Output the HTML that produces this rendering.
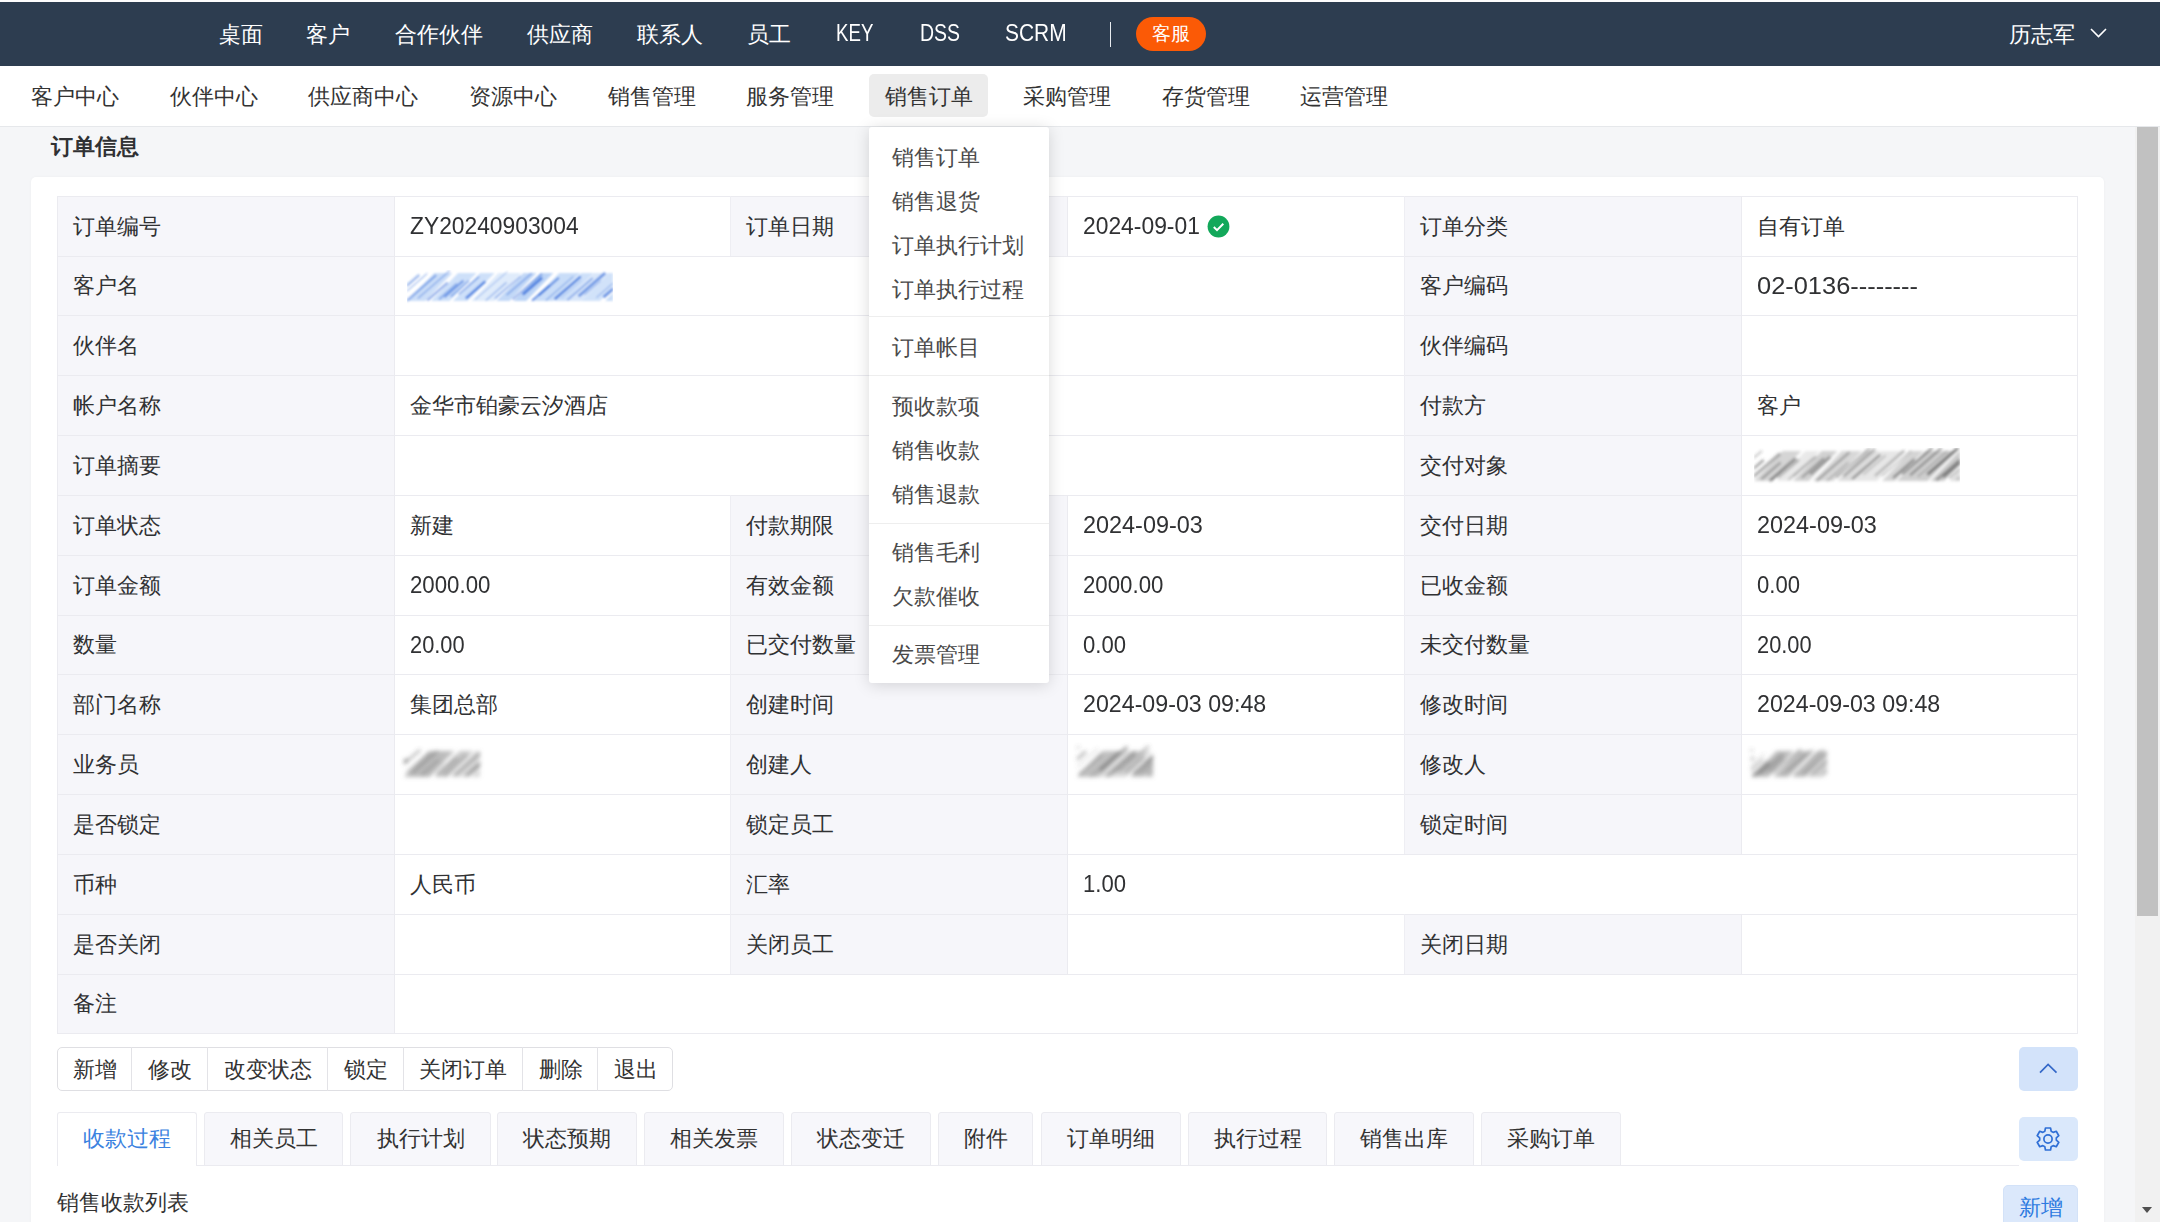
<!DOCTYPE html>
<html><head><meta charset="utf-8"><style>
html,body{margin:0;padding:0;}
body{width:2160px;height:1222px;overflow:hidden;position:relative;background:#f5f6f8;font-family:"Liberation Sans", sans-serif;}
.t{position:absolute;white-space:nowrap;}
</style></head><body>
<div style="position:absolute;left:0px;top:0px;width:2160px;height:2px;background:#fdfdfd;"></div>
<div style="position:absolute;left:0px;top:2px;width:2160px;height:64px;background:#2d3d50;"></div>
<div style="position:absolute;left:0px;top:66px;width:2160px;height:60px;background:#ffffff;"></div>
<div style="position:absolute;left:0px;top:126px;width:2160px;height:1px;background:#e6e8eb;"></div>
<div class="t " style="left:219px;top:17.50px;font-size:22px;line-height:33.0px;color:#ffffff;font-weight:normal;">桌面</div>
<div class="t " style="left:306px;top:17.50px;font-size:22px;line-height:33.0px;color:#ffffff;font-weight:normal;">客户</div>
<div class="t " style="left:395px;top:17.50px;font-size:22px;line-height:33.0px;color:#ffffff;font-weight:normal;">合作伙伴</div>
<div class="t " style="left:527px;top:17.50px;font-size:22px;line-height:33.0px;color:#ffffff;font-weight:normal;">供应商</div>
<div class="t " style="left:637px;top:17.50px;font-size:22px;line-height:33.0px;color:#ffffff;font-weight:normal;">联系人</div>
<div class="t " style="left:747px;top:17.50px;font-size:22px;line-height:33.0px;color:#ffffff;font-weight:normal;">员工</div>
<div class="t lat" style="left:836px;top:15.00px;font-size:24px;line-height:36.0px;color:#ffffff;font-weight:normal;transform:scaleX(0.777);transform-origin:0 50%;">KEY</div>
<div class="t lat" style="left:920px;top:15.00px;font-size:24px;line-height:36.0px;color:#ffffff;font-weight:normal;transform:scaleX(0.811);transform-origin:0 50%;">DSS</div>
<div class="t lat" style="left:1005px;top:15.00px;font-size:24px;line-height:36.0px;color:#ffffff;font-weight:normal;transform:scaleX(0.873);transform-origin:0 50%;">SCRM</div>
<div style="position:absolute;left:1110px;top:22px;width:1px;height:25px;background:#e8ecf0;"></div>
<div style="position:absolute;left:1136px;top:17px;width:70px;height:34px;background:#fb5a06;border-radius:17px;"></div>
<div class="t " style="left:1152px;top:19.75px;font-size:19px;line-height:28.5px;color:#ffffff;font-weight:normal;">客服</div>
<div class="t " style="left:2009px;top:17.50px;font-size:22px;line-height:33.0px;color:#ffffff;font-weight:normal;">历志军</div>
<svg style="position:absolute;left:2088px;top:26px" width="22" height="16" viewBox="0 0 22 16"><polyline points="3,3 10.5,10.5 18,3" fill="none" stroke="#fff" stroke-width="1.6"/></svg>
<div style="position:absolute;left:869px;top:74px;width:119px;height:43px;background:#ececec;border-radius:5px;"></div>
<div class="t " style="left:31px;top:79.50px;font-size:22px;line-height:33.0px;color:#333333;font-weight:normal;">客户中心</div>
<div class="t " style="left:170px;top:79.50px;font-size:22px;line-height:33.0px;color:#333333;font-weight:normal;">伙伴中心</div>
<div class="t " style="left:308px;top:79.50px;font-size:22px;line-height:33.0px;color:#333333;font-weight:normal;">供应商中心</div>
<div class="t " style="left:469px;top:79.50px;font-size:22px;line-height:33.0px;color:#333333;font-weight:normal;">资源中心</div>
<div class="t " style="left:608px;top:79.50px;font-size:22px;line-height:33.0px;color:#333333;font-weight:normal;">销售管理</div>
<div class="t " style="left:746px;top:79.50px;font-size:22px;line-height:33.0px;color:#333333;font-weight:normal;">服务管理</div>
<div class="t " style="left:885px;top:79.50px;font-size:22px;line-height:33.0px;color:#333333;font-weight:normal;">销售订单</div>
<div class="t " style="left:1023px;top:79.50px;font-size:22px;line-height:33.0px;color:#333333;font-weight:normal;">采购管理</div>
<div class="t " style="left:1162px;top:79.50px;font-size:22px;line-height:33.0px;color:#333333;font-weight:normal;">存货管理</div>
<div class="t " style="left:1300px;top:79.50px;font-size:22px;line-height:33.0px;color:#333333;font-weight:normal;">运营管理</div>
<div class="t " style="left:51px;top:130.00px;font-size:22px;line-height:33.0px;color:#303133;font-weight:bold;">订单信息</div>
<div style="position:absolute;left:31px;top:177px;width:2073px;height:1123px;background:#ffffff;border-radius:5px;box-shadow:0 0 3px rgba(0,0,0,0.04);"></div>
<div style="position:absolute;left:57px;top:196px;width:337px;height:60px;background:#f6f6fa;"></div>
<div class="t " style="left:73px;top:209.80px;font-size:22px;line-height:33.0px;color:#303133;font-weight:normal;">订单编号</div>
<div class="t lat" style="left:409.5px;top:208.30px;font-size:24px;line-height:36.0px;color:#303133;font-weight:normal;transform:scaleX(0.95);transform-origin:0 50%;">ZY20240903004</div>
<div style="position:absolute;left:730px;top:196px;width:337px;height:60px;background:#f6f6fa;"></div>
<div class="t " style="left:746px;top:209.80px;font-size:22px;line-height:33.0px;color:#303133;font-weight:normal;">订单日期</div>
<div class="t lat" style="left:1083px;top:208.30px;font-size:24px;line-height:36.0px;color:#303133;font-weight:normal;transform:scaleX(0.952);transform-origin:0 50%;">2024-09-01</div>
<svg style="position:absolute;left:1207px;top:214.8px" width="23" height="23" viewBox="0 0 23 23"><circle cx="11.5" cy="11.5" r="10.9" fill="#12a85a"/><polyline points="6.8,12 10,15.1 16.3,8.8" fill="none" stroke="#fff" stroke-width="2"/></svg>
<div style="position:absolute;left:1404px;top:196px;width:337px;height:60px;background:#f6f6fa;"></div>
<div class="t " style="left:1420px;top:209.80px;font-size:22px;line-height:33.0px;color:#303133;font-weight:normal;">订单分类</div>
<div class="t " style="left:1757px;top:209.80px;font-size:22px;line-height:33.0px;color:#303133;font-weight:normal;">自有订单</div>
<div style="position:absolute;left:57px;top:256px;width:337px;height:59px;background:#f6f6fa;"></div>
<div class="t " style="left:73px;top:269.30px;font-size:22px;line-height:33.0px;color:#303133;font-weight:normal;">客户名</div>
<svg style="position:absolute;left:407px;top:270px" width="206" height="34" viewBox="0 0 206 34"><defs><filter id="bf1" x="-30%" y="-50%" width="160%" height="200%"><feGaussianBlur stdDeviation="1.1"/></filter><clipPath id="cbf1"><rect x="0" y="0.0" width="206" height="34"/></clipPath></defs><g filter="url(#bf1)"><g clip-path="url(#cbf1)"><polygon points="0.0,31 18.3,31 45.5,3 27.2,3" fill="#8db6f0" fill-opacity="0.45"/><polygon points="23.9,31 42.4,31 69.6,3 51.1,3" fill="#8db6f0" fill-opacity="0.43"/><polygon points="45.9,31 60.5,31 87.7,3 73.1,3" fill="#8db6f0" fill-opacity="0.43"/><polygon points="64.3,31 87.4,31 114.6,3 91.5,3" fill="#8db6f0" fill-opacity="0.28"/><polygon points="89.2,31 102.5,31 129.7,3 116.4,3" fill="#8db6f0" fill-opacity="0.53"/><polygon points="106.6,31 119.2,31 146.4,3 133.8,3" fill="#8db6f0" fill-opacity="0.59"/><polygon points="125.0,31 146.2,31 173.4,3 152.2,3" fill="#8db6f0" fill-opacity="0.47"/><polygon points="147.1,31 159.3,31 186.5,3 174.3,3" fill="#8db6f0" fill-opacity="0.43"/><polygon points="159.7,31 174.3,31 201.5,3 186.9,3" fill="#8db6f0" fill-opacity="0.33"/><polygon points="174.5,31 193.0,31 220.2,3 201.7,3" fill="#8db6f0" fill-opacity="0.40"/><polygon points="198.1,31 217.3,31 244.5,3 225.3,3" fill="#8db6f0" fill-opacity="0.47"/><line x1="-27.2" y1="29.1" x2="-3.7" y2="8.7" stroke="#2f68d8" stroke-width="2.0" stroke-opacity="0.85"/><line x1="-15.2" y1="28.9" x2="12.3" y2="4.9" stroke="#2f68d8" stroke-width="2.3" stroke-opacity="0.46"/><line x1="-8.2" y1="28.3" x2="20.2" y2="3.5" stroke="#2f68d8" stroke-width="0.9" stroke-opacity="0.77"/><line x1="-0.5" y1="31.0" x2="29.2" y2="5.1" stroke="#2f68d8" stroke-width="2.5" stroke-opacity="0.45"/><line x1="10.9" y1="28.3" x2="42.8" y2="0.6" stroke="#2f68d8" stroke-width="1.6" stroke-opacity="0.39"/><line x1="20.3" y1="30.4" x2="40.7" y2="12.6" stroke="#2f68d8" stroke-width="2.2" stroke-opacity="0.52"/><line x1="32.0" y1="29.3" x2="50.0" y2="13.7" stroke="#2f68d8" stroke-width="2.2" stroke-opacity="0.40"/><line x1="37.4" y1="27.2" x2="56.4" y2="10.7" stroke="#2f68d8" stroke-width="2.2" stroke-opacity="0.57"/><line x1="43.8" y1="26.6" x2="62.0" y2="10.8" stroke="#2f68d8" stroke-width="2.1" stroke-opacity="0.41"/><line x1="51.7" y1="24.4" x2="72.2" y2="6.6" stroke="#2f68d8" stroke-width="1.2" stroke-opacity="0.75"/><line x1="58.9" y1="28.3" x2="78.3" y2="11.4" stroke="#2f68d8" stroke-width="2.4" stroke-opacity="0.78"/><line x1="68.3" y1="29.5" x2="100.4" y2="1.7" stroke="#2f68d8" stroke-width="1.0" stroke-opacity="0.48"/><line x1="78.8" y1="30.5" x2="99.6" y2="12.4" stroke="#2f68d8" stroke-width="1.4" stroke-opacity="0.40"/><line x1="87.8" y1="28.5" x2="113.6" y2="6.1" stroke="#2f68d8" stroke-width="1.2" stroke-opacity="0.58"/><line x1="99.5" y1="25.1" x2="124.9" y2="3.1" stroke="#2f68d8" stroke-width="1.7" stroke-opacity="0.44"/><line x1="105.6" y1="29.3" x2="134.9" y2="3.9" stroke="#2f68d8" stroke-width="2.4" stroke-opacity="0.44"/><line x1="115.8" y1="24.5" x2="135.1" y2="7.8" stroke="#2f68d8" stroke-width="2.5" stroke-opacity="0.79"/><line x1="125.0" y1="30.7" x2="142.8" y2="15.3" stroke="#2f68d8" stroke-width="1.6" stroke-opacity="0.83"/><line x1="131.7" y1="25.4" x2="151.9" y2="7.8" stroke="#2f68d8" stroke-width="2.1" stroke-opacity="0.65"/><line x1="138.8" y1="30.5" x2="166.4" y2="6.4" stroke="#2f68d8" stroke-width="1.1" stroke-opacity="0.46"/><line x1="147.7" y1="29.1" x2="173.7" y2="6.5" stroke="#2f68d8" stroke-width="2.3" stroke-opacity="0.81"/><line x1="154.1" y1="28.0" x2="174.5" y2="10.2" stroke="#2f68d8" stroke-width="0.8" stroke-opacity="0.38"/><line x1="160.3" y1="30.1" x2="185.6" y2="8.1" stroke="#2f68d8" stroke-width="1.5" stroke-opacity="0.53"/><line x1="171.6" y1="26.3" x2="198.2" y2="3.1" stroke="#2f68d8" stroke-width="2.6" stroke-opacity="0.64"/><line x1="177.5" y1="24.8" x2="193.9" y2="10.6" stroke="#2f68d8" stroke-width="0.9" stroke-opacity="0.70"/><line x1="189.3" y1="27.7" x2="215.6" y2="4.8" stroke="#2f68d8" stroke-width="0.8" stroke-opacity="0.72"/><line x1="196.5" y1="27.3" x2="213.8" y2="12.2" stroke="#2f68d8" stroke-width="2.6" stroke-opacity="0.72"/></g></g></svg>
<div style="position:absolute;left:1404px;top:256px;width:337px;height:59px;background:#f6f6fa;"></div>
<div class="t " style="left:1420px;top:269.30px;font-size:22px;line-height:33.0px;color:#303133;font-weight:normal;">客户编码</div>
<div class="t lat" style="left:1757px;top:267.80px;font-size:24px;line-height:36.0px;color:#303133;font-weight:normal;transform:scaleX(1.059);transform-origin:0 50%;">02-0136--------</div>
<div style="position:absolute;left:57px;top:315px;width:337px;height:60px;background:#f6f6fa;"></div>
<div class="t " style="left:73px;top:328.80px;font-size:22px;line-height:33.0px;color:#303133;font-weight:normal;">伙伴名</div>
<div style="position:absolute;left:1404px;top:315px;width:337px;height:60px;background:#f6f6fa;"></div>
<div class="t " style="left:1420px;top:328.80px;font-size:22px;line-height:33.0px;color:#303133;font-weight:normal;">伙伴编码</div>
<div style="position:absolute;left:57px;top:375px;width:337px;height:60px;background:#f6f6fa;"></div>
<div class="t " style="left:73px;top:388.80px;font-size:22px;line-height:33.0px;color:#303133;font-weight:normal;">帐户名称</div>
<div class="t " style="left:409.5px;top:388.80px;font-size:22px;line-height:33.0px;color:#303133;font-weight:normal;">金华市铂豪云汐酒店</div>
<div style="position:absolute;left:1404px;top:375px;width:337px;height:60px;background:#f6f6fa;"></div>
<div class="t " style="left:1420px;top:388.80px;font-size:22px;line-height:33.0px;color:#303133;font-weight:normal;">付款方</div>
<div class="t " style="left:1757px;top:388.80px;font-size:22px;line-height:33.0px;color:#303133;font-weight:normal;">客户</div>
<div style="position:absolute;left:57px;top:435px;width:337px;height:60px;background:#f6f6fa;"></div>
<div class="t " style="left:73px;top:448.80px;font-size:22px;line-height:33.0px;color:#303133;font-weight:normal;">订单摘要</div>
<div style="position:absolute;left:1404px;top:435px;width:337px;height:60px;background:#f6f6fa;"></div>
<div class="t " style="left:1420px;top:448.80px;font-size:22px;line-height:33.0px;color:#303133;font-weight:normal;">交付对象</div>
<svg style="position:absolute;left:1754px;top:448px" width="206" height="36" viewBox="0 0 206 36"><defs><filter id="bf2" x="-30%" y="-50%" width="160%" height="200%"><feGaussianBlur stdDeviation="1.4"/></filter><clipPath id="cbf2"><rect x="0" y="0.0" width="206" height="36"/></clipPath></defs><g filter="url(#bf2)"><g clip-path="url(#cbf2)"><polygon points="0.0,33 18.6,33 47.4,3 28.8,3" fill="#a8a8a8" fill-opacity="0.48"/><polygon points="22.6,33 36.6,33 65.4,3 51.4,3" fill="#a8a8a8" fill-opacity="0.25"/><polygon points="38.9,33 54.7,33 83.5,3 67.7,3" fill="#a8a8a8" fill-opacity="0.53"/><polygon points="58.9,33 79.3,33 108.1,3 87.7,3" fill="#a8a8a8" fill-opacity="0.45"/><polygon points="83.3,33 97.3,33 126.1,3 112.1,3" fill="#a8a8a8" fill-opacity="0.40"/><polygon points="98.3,33 122.9,33 151.7,3 127.1,3" fill="#a8a8a8" fill-opacity="0.27"/><polygon points="127.9,33 140.9,33 169.7,3 156.7,3" fill="#a8a8a8" fill-opacity="0.49"/><polygon points="142.9,33 160.6,33 189.4,3 171.7,3" fill="#a8a8a8" fill-opacity="0.54"/><polygon points="160.7,33 173.6,33 202.4,3 189.5,3" fill="#a8a8a8" fill-opacity="0.57"/><polygon points="176.6,33 189.9,33 218.7,3 205.4,3" fill="#a8a8a8" fill-opacity="0.60"/><polygon points="195.6,33 209.1,33 237.9,3 224.4,3" fill="#a8a8a8" fill-opacity="0.40"/><line x1="-28.8" y1="31.8" x2="-0.8" y2="7.5" stroke="#4a4a4a" stroke-width="1.4" stroke-opacity="0.70"/><line x1="-23.4" y1="30.1" x2="7.9" y2="2.9" stroke="#4a4a4a" stroke-width="1.1" stroke-opacity="0.56"/><line x1="-14.3" y1="32.8" x2="9.6" y2="12.0" stroke="#4a4a4a" stroke-width="1.7" stroke-opacity="0.71"/><line x1="-2.5" y1="30.4" x2="26.2" y2="5.5" stroke="#4a4a4a" stroke-width="2.6" stroke-opacity="0.53"/><line x1="7.3" y1="31.3" x2="26.5" y2="14.6" stroke="#4a4a4a" stroke-width="2.0" stroke-opacity="0.53"/><line x1="15.9" y1="32.8" x2="41.8" y2="10.3" stroke="#4a4a4a" stroke-width="2.3" stroke-opacity="0.76"/><line x1="23.9" y1="29.9" x2="45.0" y2="11.6" stroke="#4a4a4a" stroke-width="1.7" stroke-opacity="0.54"/><line x1="34.3" y1="31.7" x2="61.1" y2="8.5" stroke="#4a4a4a" stroke-width="1.0" stroke-opacity="0.70"/><line x1="39.6" y1="28.4" x2="62.8" y2="8.3" stroke="#4a4a4a" stroke-width="1.3" stroke-opacity="0.38"/><line x1="47.8" y1="29.6" x2="69.9" y2="10.3" stroke="#4a4a4a" stroke-width="1.2" stroke-opacity="0.83"/><line x1="56.2" y1="26.3" x2="76.3" y2="8.8" stroke="#4a4a4a" stroke-width="2.5" stroke-opacity="0.53"/><line x1="62.5" y1="33.0" x2="95.5" y2="4.3" stroke="#4a4a4a" stroke-width="2.1" stroke-opacity="0.48"/><line x1="72.9" y1="32.9" x2="94.3" y2="14.3" stroke="#4a4a4a" stroke-width="1.4" stroke-opacity="0.37"/><line x1="82.2" y1="29.4" x2="116.7" y2="-0.6" stroke="#4a4a4a" stroke-width="2.6" stroke-opacity="0.36"/><line x1="89.5" y1="28.4" x2="121.1" y2="0.9" stroke="#4a4a4a" stroke-width="2.2" stroke-opacity="0.46"/><line x1="98.2" y1="31.1" x2="126.2" y2="6.7" stroke="#4a4a4a" stroke-width="1.7" stroke-opacity="0.82"/><line x1="109.4" y1="26.7" x2="131.7" y2="7.3" stroke="#4a4a4a" stroke-width="1.1" stroke-opacity="0.49"/><line x1="121.0" y1="27.9" x2="150.3" y2="2.5" stroke="#4a4a4a" stroke-width="1.7" stroke-opacity="0.46"/><line x1="128.0" y1="28.0" x2="157.1" y2="2.8" stroke="#4a4a4a" stroke-width="1.3" stroke-opacity="0.42"/><line x1="139.2" y1="29.9" x2="160.6" y2="11.2" stroke="#4a4a4a" stroke-width="1.6" stroke-opacity="0.84"/><line x1="148.2" y1="26.1" x2="181.3" y2="-2.7" stroke="#4a4a4a" stroke-width="1.9" stroke-opacity="0.73"/><line x1="156.1" y1="27.3" x2="188.9" y2="-1.2" stroke="#4a4a4a" stroke-width="1.9" stroke-opacity="0.64"/><line x1="163.5" y1="28.9" x2="193.5" y2="2.9" stroke="#4a4a4a" stroke-width="1.5" stroke-opacity="0.36"/><line x1="173.5" y1="26.5" x2="204.5" y2="-0.4" stroke="#4a4a4a" stroke-width="2.4" stroke-opacity="0.81"/><line x1="182.2" y1="32.3" x2="206.0" y2="11.6" stroke="#4a4a4a" stroke-width="2.2" stroke-opacity="0.53"/><line x1="189.4" y1="29.1" x2="218.5" y2="3.8" stroke="#4a4a4a" stroke-width="2.5" stroke-opacity="0.66"/><line x1="195.3" y1="30.2" x2="224.6" y2="4.7" stroke="#4a4a4a" stroke-width="1.8" stroke-opacity="0.47"/><line x1="203.1" y1="32.0" x2="232.2" y2="6.7" stroke="#4a4a4a" stroke-width="1.4" stroke-opacity="0.40"/></g></g></svg>
<div style="position:absolute;left:57px;top:495px;width:337px;height:60px;background:#f6f6fa;"></div>
<div class="t " style="left:73px;top:508.80px;font-size:22px;line-height:33.0px;color:#303133;font-weight:normal;">订单状态</div>
<div class="t " style="left:409.5px;top:508.80px;font-size:22px;line-height:33.0px;color:#303133;font-weight:normal;">新建</div>
<div style="position:absolute;left:730px;top:495px;width:337px;height:60px;background:#f6f6fa;"></div>
<div class="t " style="left:746px;top:508.80px;font-size:22px;line-height:33.0px;color:#303133;font-weight:normal;">付款期限</div>
<div class="t lat" style="left:1083px;top:507.30px;font-size:24px;line-height:36.0px;color:#303133;font-weight:normal;transform:scaleX(0.976);transform-origin:0 50%;">2024-09-03</div>
<div style="position:absolute;left:1404px;top:495px;width:337px;height:60px;background:#f6f6fa;"></div>
<div class="t " style="left:1420px;top:508.80px;font-size:22px;line-height:33.0px;color:#303133;font-weight:normal;">交付日期</div>
<div class="t lat" style="left:1757px;top:507.30px;font-size:24px;line-height:36.0px;color:#303133;font-weight:normal;transform:scaleX(0.976);transform-origin:0 50%;">2024-09-03</div>
<div style="position:absolute;left:57px;top:555px;width:337px;height:60px;background:#f6f6fa;"></div>
<div class="t " style="left:73px;top:568.80px;font-size:22px;line-height:33.0px;color:#303133;font-weight:normal;">订单金额</div>
<div class="t lat" style="left:409.5px;top:567.30px;font-size:24px;line-height:36.0px;color:#303133;font-weight:normal;transform:scaleX(0.927);transform-origin:0 50%;">2000.00</div>
<div style="position:absolute;left:730px;top:555px;width:337px;height:60px;background:#f6f6fa;"></div>
<div class="t " style="left:746px;top:568.80px;font-size:22px;line-height:33.0px;color:#303133;font-weight:normal;">有效金额</div>
<div class="t lat" style="left:1083px;top:567.30px;font-size:24px;line-height:36.0px;color:#303133;font-weight:normal;transform:scaleX(0.927);transform-origin:0 50%;">2000.00</div>
<div style="position:absolute;left:1404px;top:555px;width:337px;height:60px;background:#f6f6fa;"></div>
<div class="t " style="left:1420px;top:568.80px;font-size:22px;line-height:33.0px;color:#303133;font-weight:normal;">已收金额</div>
<div class="t lat" style="left:1757px;top:567.30px;font-size:24px;line-height:36.0px;color:#303133;font-weight:normal;transform:scaleX(0.92);transform-origin:0 50%;">0.00</div>
<div style="position:absolute;left:57px;top:615px;width:337px;height:59px;background:#f6f6fa;"></div>
<div class="t " style="left:73px;top:628.30px;font-size:22px;line-height:33.0px;color:#303133;font-weight:normal;">数量</div>
<div class="t lat" style="left:409.5px;top:626.80px;font-size:24px;line-height:36.0px;color:#303133;font-weight:normal;transform:scaleX(0.91);transform-origin:0 50%;">20.00</div>
<div style="position:absolute;left:730px;top:615px;width:337px;height:59px;background:#f6f6fa;"></div>
<div class="t " style="left:746px;top:628.30px;font-size:22px;line-height:33.0px;color:#303133;font-weight:normal;">已交付数量</div>
<div class="t lat" style="left:1083px;top:626.80px;font-size:24px;line-height:36.0px;color:#303133;font-weight:normal;transform:scaleX(0.92);transform-origin:0 50%;">0.00</div>
<div style="position:absolute;left:1404px;top:615px;width:337px;height:59px;background:#f6f6fa;"></div>
<div class="t " style="left:1420px;top:628.30px;font-size:22px;line-height:33.0px;color:#303133;font-weight:normal;">未交付数量</div>
<div class="t lat" style="left:1757px;top:626.80px;font-size:24px;line-height:36.0px;color:#303133;font-weight:normal;transform:scaleX(0.91);transform-origin:0 50%;">20.00</div>
<div style="position:absolute;left:57px;top:674px;width:337px;height:60px;background:#f6f6fa;"></div>
<div class="t " style="left:73px;top:687.80px;font-size:22px;line-height:33.0px;color:#303133;font-weight:normal;">部门名称</div>
<div class="t " style="left:409.5px;top:687.80px;font-size:22px;line-height:33.0px;color:#303133;font-weight:normal;">集团总部</div>
<div style="position:absolute;left:730px;top:674px;width:337px;height:60px;background:#f6f6fa;"></div>
<div class="t " style="left:746px;top:687.80px;font-size:22px;line-height:33.0px;color:#303133;font-weight:normal;">创建时间</div>
<div class="t lat" style="left:1083px;top:686.30px;font-size:24px;line-height:36.0px;color:#303133;font-weight:normal;transform:scaleX(0.967);transform-origin:0 50%;">2024-09-03 09:48</div>
<div style="position:absolute;left:1404px;top:674px;width:337px;height:60px;background:#f6f6fa;"></div>
<div class="t " style="left:1420px;top:687.80px;font-size:22px;line-height:33.0px;color:#303133;font-weight:normal;">修改时间</div>
<div class="t lat" style="left:1757px;top:686.30px;font-size:24px;line-height:36.0px;color:#303133;font-weight:normal;transform:scaleX(0.967);transform-origin:0 50%;">2024-09-03 09:48</div>
<div style="position:absolute;left:57px;top:734px;width:337px;height:60px;background:#f6f6fa;"></div>
<div class="t " style="left:73px;top:747.80px;font-size:22px;line-height:33.0px;color:#303133;font-weight:normal;">业务员</div>
<svg style="position:absolute;left:398px;top:742px" width="88" height="44" viewBox="-6 -6 88 44"><defs><filter id="bf5" x="-30%" y="-50%" width="160%" height="200%"><feGaussianBlur stdDeviation="2.0"/></filter><clipPath id="cbf5"><rect x="0" y="-3.0" width="76" height="38"/></clipPath></defs><g filter="url(#bf5)"><g clip-path="url(#cbf5)"><polygon points="0.0,29 24.9,29 50.5,3 25.6,3" fill="#8a8a8a" fill-opacity="0.58"/><polygon points="30.3,29 43.5,29 69.1,3 55.9,3" fill="#8a8a8a" fill-opacity="0.46"/><polygon points="46.0,29 65.4,29 91.0,3 71.6,3" fill="#8a8a8a" fill-opacity="0.30"/><polygon points="66.6,29 84.8,29 110.4,3 92.2,3" fill="#8a8a8a" fill-opacity="0.33"/><line x1="-25.6" y1="24.5" x2="-9.4" y2="10.3" stroke="#5a5a5a" stroke-width="0.8" stroke-opacity="0.56"/><line x1="-17.0" y1="28.6" x2="3.3" y2="11.0" stroke="#5a5a5a" stroke-width="2.1" stroke-opacity="0.74"/><line x1="-7.9" y1="22.8" x2="16.3" y2="1.7" stroke="#5a5a5a" stroke-width="2.0" stroke-opacity="0.53"/><line x1="2.4" y1="24.8" x2="25.9" y2="4.3" stroke="#5a5a5a" stroke-width="1.5" stroke-opacity="0.51"/><line x1="8.0" y1="25.2" x2="33.7" y2="2.9" stroke="#5a5a5a" stroke-width="1.7" stroke-opacity="0.57"/><line x1="17.5" y1="26.9" x2="35.1" y2="11.6" stroke="#5a5a5a" stroke-width="1.1" stroke-opacity="0.76"/><line x1="23.9" y1="28.8" x2="40.3" y2="14.5" stroke="#5a5a5a" stroke-width="1.0" stroke-opacity="0.49"/><line x1="32.9" y1="26.6" x2="52.8" y2="9.3" stroke="#5a5a5a" stroke-width="2.3" stroke-opacity="0.49"/><line x1="40.0" y1="27.3" x2="63.2" y2="7.2" stroke="#5a5a5a" stroke-width="2.2" stroke-opacity="0.40"/><line x1="50.5" y1="27.5" x2="77.9" y2="3.7" stroke="#5a5a5a" stroke-width="2.1" stroke-opacity="0.62"/><line x1="62.0" y1="27.9" x2="91.0" y2="2.6" stroke="#5a5a5a" stroke-width="1.9" stroke-opacity="0.84"/><line x1="67.3" y1="23.8" x2="82.6" y2="10.5" stroke="#5a5a5a" stroke-width="1.5" stroke-opacity="0.69"/></g></g></svg>
<div style="position:absolute;left:730px;top:734px;width:337px;height:60px;background:#f6f6fa;"></div>
<div class="t " style="left:746px;top:747.80px;font-size:22px;line-height:33.0px;color:#303133;font-weight:normal;">创建人</div>
<svg style="position:absolute;left:1071px;top:742px" width="88" height="44" viewBox="-6 -6 88 44"><defs><filter id="bf6" x="-30%" y="-50%" width="160%" height="200%"><feGaussianBlur stdDeviation="2.0"/></filter><clipPath id="cbf6"><rect x="0" y="-3.0" width="76" height="38"/></clipPath></defs><g filter="url(#bf6)"><g clip-path="url(#cbf6)"><polygon points="0.0,29 22.0,29 47.6,3 25.6,3" fill="#8a8a8a" fill-opacity="0.54"/><polygon points="23.1,29 49.0,29 74.6,3 48.7,3" fill="#8a8a8a" fill-opacity="0.32"/><polygon points="53.1,29 66.4,29 92.0,3 78.7,3" fill="#8a8a8a" fill-opacity="0.52"/><polygon points="67.3,29 89.2,29 114.8,3 92.9,3" fill="#8a8a8a" fill-opacity="0.50"/><line x1="-25.6" y1="22.7" x2="2.3" y2="-1.6" stroke="#5a5a5a" stroke-width="1.6" stroke-opacity="0.41"/><line x1="-17.0" y1="26.2" x2="9.0" y2="3.5" stroke="#5a5a5a" stroke-width="2.5" stroke-opacity="0.50"/><line x1="-5.3" y1="23.6" x2="21.0" y2="0.7" stroke="#5a5a5a" stroke-width="1.0" stroke-opacity="0.43"/><line x1="2.0" y1="26.7" x2="25.0" y2="6.6" stroke="#5a5a5a" stroke-width="1.3" stroke-opacity="0.80"/><line x1="13.4" y1="28.6" x2="41.8" y2="3.9" stroke="#5a5a5a" stroke-width="1.4" stroke-opacity="0.40"/><line x1="23.1" y1="22.7" x2="50.3" y2="-1.0" stroke="#5a5a5a" stroke-width="2.2" stroke-opacity="0.78"/><line x1="30.0" y1="28.4" x2="58.7" y2="3.4" stroke="#5a5a5a" stroke-width="2.1" stroke-opacity="0.60"/><line x1="36.1" y1="24.7" x2="58.2" y2="5.5" stroke="#5a5a5a" stroke-width="1.1" stroke-opacity="0.84"/><line x1="42.0" y1="24.1" x2="71.8" y2="-1.9" stroke="#5a5a5a" stroke-width="1.7" stroke-opacity="0.62"/><line x1="48.7" y1="24.9" x2="67.5" y2="8.5" stroke="#5a5a5a" stroke-width="1.9" stroke-opacity="0.67"/><line x1="56.4" y1="26.0" x2="77.4" y2="7.8" stroke="#5a5a5a" stroke-width="2.2" stroke-opacity="0.77"/><line x1="63.2" y1="26.2" x2="86.7" y2="5.8" stroke="#5a5a5a" stroke-width="1.1" stroke-opacity="0.79"/><line x1="69.9" y1="26.1" x2="85.7" y2="12.4" stroke="#5a5a5a" stroke-width="1.5" stroke-opacity="0.51"/></g></g></svg>
<div style="position:absolute;left:1404px;top:734px;width:337px;height:60px;background:#f6f6fa;"></div>
<div class="t " style="left:1420px;top:747.80px;font-size:22px;line-height:33.0px;color:#303133;font-weight:normal;">修改人</div>
<svg style="position:absolute;left:1745px;top:742px" width="88" height="44" viewBox="-6 -6 88 44"><defs><filter id="bf7" x="-30%" y="-50%" width="160%" height="200%"><feGaussianBlur stdDeviation="2.0"/></filter><clipPath id="cbf7"><rect x="0" y="-3.0" width="76" height="38"/></clipPath></defs><g filter="url(#bf7)"><g clip-path="url(#cbf7)"><polygon points="0.0,29 17.3,29 42.9,3 25.6,3" fill="#8a8a8a" fill-opacity="0.57"/><polygon points="22.3,29 37.3,29 62.9,3 47.9,3" fill="#8a8a8a" fill-opacity="0.56"/><polygon points="41.2,29 53.7,29 79.3,3 66.8,3" fill="#8a8a8a" fill-opacity="0.58"/><polygon points="55.3,29 71.6,29 97.2,3 80.9,3" fill="#8a8a8a" fill-opacity="0.40"/><polygon points="75.1,29 88.8,29 114.4,3 100.7,3" fill="#8a8a8a" fill-opacity="0.49"/><line x1="-25.6" y1="25.0" x2="1.2" y2="1.7" stroke="#5a5a5a" stroke-width="1.7" stroke-opacity="0.76"/><line x1="-19.3" y1="28.3" x2="2.6" y2="9.2" stroke="#5a5a5a" stroke-width="1.4" stroke-opacity="0.84"/><line x1="-9.9" y1="26.3" x2="13.8" y2="5.8" stroke="#5a5a5a" stroke-width="1.0" stroke-opacity="0.44"/><line x1="-3.8" y1="25.4" x2="12.2" y2="11.5" stroke="#5a5a5a" stroke-width="1.6" stroke-opacity="0.61"/><line x1="2.1" y1="27.9" x2="17.7" y2="14.4" stroke="#5a5a5a" stroke-width="2.4" stroke-opacity="0.76"/><line x1="8.7" y1="26.2" x2="32.0" y2="5.9" stroke="#5a5a5a" stroke-width="1.6" stroke-opacity="0.60"/><line x1="17.2" y1="23.8" x2="33.0" y2="10.0" stroke="#5a5a5a" stroke-width="1.7" stroke-opacity="0.49"/><line x1="22.5" y1="25.0" x2="49.7" y2="1.4" stroke="#5a5a5a" stroke-width="1.5" stroke-opacity="0.58"/><line x1="30.9" y1="26.8" x2="55.1" y2="5.7" stroke="#5a5a5a" stroke-width="1.2" stroke-opacity="0.38"/><line x1="36.8" y1="23.4" x2="62.0" y2="1.5" stroke="#5a5a5a" stroke-width="1.0" stroke-opacity="0.73"/><line x1="43.3" y1="26.6" x2="72.5" y2="1.2" stroke="#5a5a5a" stroke-width="1.1" stroke-opacity="0.43"/><line x1="52.3" y1="26.1" x2="75.4" y2="6.1" stroke="#5a5a5a" stroke-width="1.9" stroke-opacity="0.50"/><line x1="60.8" y1="26.1" x2="85.9" y2="4.3" stroke="#5a5a5a" stroke-width="1.6" stroke-opacity="0.53"/><line x1="72.7" y1="26.3" x2="99.0" y2="3.5" stroke="#5a5a5a" stroke-width="1.0" stroke-opacity="0.75"/></g></g></svg>
<div style="position:absolute;left:57px;top:794px;width:337px;height:60px;background:#f6f6fa;"></div>
<div class="t " style="left:73px;top:807.80px;font-size:22px;line-height:33.0px;color:#303133;font-weight:normal;">是否锁定</div>
<div style="position:absolute;left:730px;top:794px;width:337px;height:60px;background:#f6f6fa;"></div>
<div class="t " style="left:746px;top:807.80px;font-size:22px;line-height:33.0px;color:#303133;font-weight:normal;">锁定员工</div>
<div style="position:absolute;left:1404px;top:794px;width:337px;height:60px;background:#f6f6fa;"></div>
<div class="t " style="left:1420px;top:807.80px;font-size:22px;line-height:33.0px;color:#303133;font-weight:normal;">锁定时间</div>
<div style="position:absolute;left:57px;top:854px;width:337px;height:60px;background:#f6f6fa;"></div>
<div class="t " style="left:73px;top:867.80px;font-size:22px;line-height:33.0px;color:#303133;font-weight:normal;">币种</div>
<div class="t " style="left:409.5px;top:867.80px;font-size:22px;line-height:33.0px;color:#303133;font-weight:normal;">人民币</div>
<div style="position:absolute;left:730px;top:854px;width:337px;height:60px;background:#f6f6fa;"></div>
<div class="t " style="left:746px;top:867.80px;font-size:22px;line-height:33.0px;color:#303133;font-weight:normal;">汇率</div>
<div class="t lat" style="left:1083px;top:866.30px;font-size:24px;line-height:36.0px;color:#303133;font-weight:normal;transform:scaleX(0.92);transform-origin:0 50%;">1.00</div>
<div style="position:absolute;left:57px;top:914px;width:337px;height:60px;background:#f6f6fa;"></div>
<div class="t " style="left:73px;top:927.80px;font-size:22px;line-height:33.0px;color:#303133;font-weight:normal;">是否关闭</div>
<div style="position:absolute;left:730px;top:914px;width:337px;height:60px;background:#f6f6fa;"></div>
<div class="t " style="left:746px;top:927.80px;font-size:22px;line-height:33.0px;color:#303133;font-weight:normal;">关闭员工</div>
<div style="position:absolute;left:1404px;top:914px;width:337px;height:60px;background:#f6f6fa;"></div>
<div class="t " style="left:1420px;top:927.80px;font-size:22px;line-height:33.0px;color:#303133;font-weight:normal;">关闭日期</div>
<div style="position:absolute;left:57px;top:974px;width:337px;height:59px;background:#f6f6fa;"></div>
<div class="t " style="left:73px;top:987.30px;font-size:22px;line-height:33.0px;color:#303133;font-weight:normal;">备注</div>
<div style="position:absolute;left:57px;top:196px;width:2021px;height:1px;background:#ebebf0;"></div>
<div style="position:absolute;left:57px;top:256px;width:2021px;height:1px;background:#ebebf0;"></div>
<div style="position:absolute;left:57px;top:315px;width:2021px;height:1px;background:#ebebf0;"></div>
<div style="position:absolute;left:57px;top:375px;width:2021px;height:1px;background:#ebebf0;"></div>
<div style="position:absolute;left:57px;top:435px;width:2021px;height:1px;background:#ebebf0;"></div>
<div style="position:absolute;left:57px;top:495px;width:2021px;height:1px;background:#ebebf0;"></div>
<div style="position:absolute;left:57px;top:555px;width:2021px;height:1px;background:#ebebf0;"></div>
<div style="position:absolute;left:57px;top:615px;width:2021px;height:1px;background:#ebebf0;"></div>
<div style="position:absolute;left:57px;top:674px;width:2021px;height:1px;background:#ebebf0;"></div>
<div style="position:absolute;left:57px;top:734px;width:2021px;height:1px;background:#ebebf0;"></div>
<div style="position:absolute;left:57px;top:794px;width:2021px;height:1px;background:#ebebf0;"></div>
<div style="position:absolute;left:57px;top:854px;width:2021px;height:1px;background:#ebebf0;"></div>
<div style="position:absolute;left:57px;top:914px;width:2021px;height:1px;background:#ebebf0;"></div>
<div style="position:absolute;left:57px;top:974px;width:2021px;height:1px;background:#ebebf0;"></div>
<div style="position:absolute;left:57px;top:1033px;width:2021px;height:1px;background:#ebebf0;"></div>
<div style="position:absolute;left:57px;top:196px;width:1px;height:60px;background:#ebebf0;"></div>
<div style="position:absolute;left:394px;top:196px;width:1px;height:60px;background:#ebebf0;"></div>
<div style="position:absolute;left:730px;top:196px;width:1px;height:60px;background:#eeeef3;"></div>
<div style="position:absolute;left:1067px;top:196px;width:1px;height:60px;background:#ebebf0;"></div>
<div style="position:absolute;left:1404px;top:196px;width:1px;height:60px;background:#eeeef3;"></div>
<div style="position:absolute;left:1741px;top:196px;width:1px;height:60px;background:#ebebf0;"></div>
<div style="position:absolute;left:2077px;top:196px;width:1px;height:60px;background:#ebebf0;"></div>
<div style="position:absolute;left:57px;top:256px;width:1px;height:59px;background:#ebebf0;"></div>
<div style="position:absolute;left:394px;top:256px;width:1px;height:59px;background:#ebebf0;"></div>
<div style="position:absolute;left:1404px;top:256px;width:1px;height:59px;background:#eeeef3;"></div>
<div style="position:absolute;left:1741px;top:256px;width:1px;height:59px;background:#ebebf0;"></div>
<div style="position:absolute;left:2077px;top:256px;width:1px;height:59px;background:#ebebf0;"></div>
<div style="position:absolute;left:57px;top:315px;width:1px;height:60px;background:#ebebf0;"></div>
<div style="position:absolute;left:394px;top:315px;width:1px;height:60px;background:#ebebf0;"></div>
<div style="position:absolute;left:1404px;top:315px;width:1px;height:60px;background:#eeeef3;"></div>
<div style="position:absolute;left:1741px;top:315px;width:1px;height:60px;background:#ebebf0;"></div>
<div style="position:absolute;left:2077px;top:315px;width:1px;height:60px;background:#ebebf0;"></div>
<div style="position:absolute;left:57px;top:375px;width:1px;height:60px;background:#ebebf0;"></div>
<div style="position:absolute;left:394px;top:375px;width:1px;height:60px;background:#ebebf0;"></div>
<div style="position:absolute;left:1404px;top:375px;width:1px;height:60px;background:#eeeef3;"></div>
<div style="position:absolute;left:1741px;top:375px;width:1px;height:60px;background:#ebebf0;"></div>
<div style="position:absolute;left:2077px;top:375px;width:1px;height:60px;background:#ebebf0;"></div>
<div style="position:absolute;left:57px;top:435px;width:1px;height:60px;background:#ebebf0;"></div>
<div style="position:absolute;left:394px;top:435px;width:1px;height:60px;background:#ebebf0;"></div>
<div style="position:absolute;left:1404px;top:435px;width:1px;height:60px;background:#eeeef3;"></div>
<div style="position:absolute;left:1741px;top:435px;width:1px;height:60px;background:#ebebf0;"></div>
<div style="position:absolute;left:2077px;top:435px;width:1px;height:60px;background:#ebebf0;"></div>
<div style="position:absolute;left:57px;top:495px;width:1px;height:60px;background:#ebebf0;"></div>
<div style="position:absolute;left:394px;top:495px;width:1px;height:60px;background:#ebebf0;"></div>
<div style="position:absolute;left:730px;top:495px;width:1px;height:60px;background:#eeeef3;"></div>
<div style="position:absolute;left:1067px;top:495px;width:1px;height:60px;background:#ebebf0;"></div>
<div style="position:absolute;left:1404px;top:495px;width:1px;height:60px;background:#eeeef3;"></div>
<div style="position:absolute;left:1741px;top:495px;width:1px;height:60px;background:#ebebf0;"></div>
<div style="position:absolute;left:2077px;top:495px;width:1px;height:60px;background:#ebebf0;"></div>
<div style="position:absolute;left:57px;top:555px;width:1px;height:60px;background:#ebebf0;"></div>
<div style="position:absolute;left:394px;top:555px;width:1px;height:60px;background:#ebebf0;"></div>
<div style="position:absolute;left:730px;top:555px;width:1px;height:60px;background:#eeeef3;"></div>
<div style="position:absolute;left:1067px;top:555px;width:1px;height:60px;background:#ebebf0;"></div>
<div style="position:absolute;left:1404px;top:555px;width:1px;height:60px;background:#eeeef3;"></div>
<div style="position:absolute;left:1741px;top:555px;width:1px;height:60px;background:#ebebf0;"></div>
<div style="position:absolute;left:2077px;top:555px;width:1px;height:60px;background:#ebebf0;"></div>
<div style="position:absolute;left:57px;top:615px;width:1px;height:59px;background:#ebebf0;"></div>
<div style="position:absolute;left:394px;top:615px;width:1px;height:59px;background:#ebebf0;"></div>
<div style="position:absolute;left:730px;top:615px;width:1px;height:59px;background:#eeeef3;"></div>
<div style="position:absolute;left:1067px;top:615px;width:1px;height:59px;background:#ebebf0;"></div>
<div style="position:absolute;left:1404px;top:615px;width:1px;height:59px;background:#eeeef3;"></div>
<div style="position:absolute;left:1741px;top:615px;width:1px;height:59px;background:#ebebf0;"></div>
<div style="position:absolute;left:2077px;top:615px;width:1px;height:59px;background:#ebebf0;"></div>
<div style="position:absolute;left:57px;top:674px;width:1px;height:60px;background:#ebebf0;"></div>
<div style="position:absolute;left:394px;top:674px;width:1px;height:60px;background:#ebebf0;"></div>
<div style="position:absolute;left:730px;top:674px;width:1px;height:60px;background:#eeeef3;"></div>
<div style="position:absolute;left:1067px;top:674px;width:1px;height:60px;background:#ebebf0;"></div>
<div style="position:absolute;left:1404px;top:674px;width:1px;height:60px;background:#eeeef3;"></div>
<div style="position:absolute;left:1741px;top:674px;width:1px;height:60px;background:#ebebf0;"></div>
<div style="position:absolute;left:2077px;top:674px;width:1px;height:60px;background:#ebebf0;"></div>
<div style="position:absolute;left:57px;top:734px;width:1px;height:60px;background:#ebebf0;"></div>
<div style="position:absolute;left:394px;top:734px;width:1px;height:60px;background:#ebebf0;"></div>
<div style="position:absolute;left:730px;top:734px;width:1px;height:60px;background:#eeeef3;"></div>
<div style="position:absolute;left:1067px;top:734px;width:1px;height:60px;background:#ebebf0;"></div>
<div style="position:absolute;left:1404px;top:734px;width:1px;height:60px;background:#eeeef3;"></div>
<div style="position:absolute;left:1741px;top:734px;width:1px;height:60px;background:#ebebf0;"></div>
<div style="position:absolute;left:2077px;top:734px;width:1px;height:60px;background:#ebebf0;"></div>
<div style="position:absolute;left:57px;top:794px;width:1px;height:60px;background:#ebebf0;"></div>
<div style="position:absolute;left:394px;top:794px;width:1px;height:60px;background:#ebebf0;"></div>
<div style="position:absolute;left:730px;top:794px;width:1px;height:60px;background:#eeeef3;"></div>
<div style="position:absolute;left:1067px;top:794px;width:1px;height:60px;background:#ebebf0;"></div>
<div style="position:absolute;left:1404px;top:794px;width:1px;height:60px;background:#eeeef3;"></div>
<div style="position:absolute;left:1741px;top:794px;width:1px;height:60px;background:#ebebf0;"></div>
<div style="position:absolute;left:2077px;top:794px;width:1px;height:60px;background:#ebebf0;"></div>
<div style="position:absolute;left:57px;top:854px;width:1px;height:60px;background:#ebebf0;"></div>
<div style="position:absolute;left:394px;top:854px;width:1px;height:60px;background:#ebebf0;"></div>
<div style="position:absolute;left:730px;top:854px;width:1px;height:60px;background:#eeeef3;"></div>
<div style="position:absolute;left:1067px;top:854px;width:1px;height:60px;background:#ebebf0;"></div>
<div style="position:absolute;left:2077px;top:854px;width:1px;height:60px;background:#ebebf0;"></div>
<div style="position:absolute;left:57px;top:914px;width:1px;height:60px;background:#ebebf0;"></div>
<div style="position:absolute;left:394px;top:914px;width:1px;height:60px;background:#ebebf0;"></div>
<div style="position:absolute;left:730px;top:914px;width:1px;height:60px;background:#eeeef3;"></div>
<div style="position:absolute;left:1067px;top:914px;width:1px;height:60px;background:#ebebf0;"></div>
<div style="position:absolute;left:1404px;top:914px;width:1px;height:60px;background:#eeeef3;"></div>
<div style="position:absolute;left:1741px;top:914px;width:1px;height:60px;background:#ebebf0;"></div>
<div style="position:absolute;left:2077px;top:914px;width:1px;height:60px;background:#ebebf0;"></div>
<div style="position:absolute;left:57px;top:974px;width:1px;height:59px;background:#ebebf0;"></div>
<div style="position:absolute;left:394px;top:974px;width:1px;height:59px;background:#ebebf0;"></div>
<div style="position:absolute;left:2077px;top:974px;width:1px;height:59px;background:#ebebf0;"></div>
<div style="position:absolute;left:57px;top:1047px;width:616px;height:44px;border:1px solid #dfdfe3;border-radius:5px;box-sizing:border-box;background:#fff;"></div>
<div style="position:absolute;left:131px;top:1047px;width:1px;height:44px;background:#e3e3e7;"></div>
<div style="position:absolute;left:207px;top:1047px;width:1px;height:44px;background:#e3e3e7;"></div>
<div style="position:absolute;left:327px;top:1047px;width:1px;height:44px;background:#e3e3e7;"></div>
<div style="position:absolute;left:403px;top:1047px;width:1px;height:44px;background:#e3e3e7;"></div>
<div style="position:absolute;left:522px;top:1047px;width:1px;height:44px;background:#e3e3e7;"></div>
<div style="position:absolute;left:597px;top:1047px;width:1px;height:44px;background:#e3e3e7;"></div>
<div class="t " style="left:73.15px;top:1052.50px;font-size:22px;line-height:33.0px;color:#333333;font-weight:normal;">新增</div>
<div class="t " style="left:148.15px;top:1052.50px;font-size:22px;line-height:33.0px;color:#333333;font-weight:normal;">修改</div>
<div class="t " style="left:224.0px;top:1052.50px;font-size:22px;line-height:33.0px;color:#333333;font-weight:normal;">改变状态</div>
<div class="t " style="left:343.85px;top:1052.50px;font-size:22px;line-height:33.0px;color:#333333;font-weight:normal;">锁定</div>
<div class="t " style="left:419.35px;top:1052.50px;font-size:22px;line-height:33.0px;color:#333333;font-weight:normal;">关闭订单</div>
<div class="t " style="left:538.5px;top:1052.50px;font-size:22px;line-height:33.0px;color:#333333;font-weight:normal;">删除</div>
<div class="t " style="left:614.0px;top:1052.50px;font-size:22px;line-height:33.0px;color:#333333;font-weight:normal;">退出</div>
<div style="position:absolute;left:2019px;top:1047px;width:59px;height:44px;background:#d3e3fa;border-radius:5px;"></div>
<svg style="position:absolute;left:2036px;top:1059px" width="24" height="20" viewBox="0 0 24 20"><polyline points="4,13.6 12.1,5.5 20.5,13.6" fill="none" stroke="#3468c8" stroke-width="1.7"/></svg>
<div style="position:absolute;left:57px;top:1165px;width:1962px;height:1px;background:#ebebf0;"></div>
<div style="position:absolute;left:57px;top:1112px;width:140px;height:54px;background:#fff;border:1px solid #ebebf0;border-bottom:none;border-radius:3px 3px 0 0;box-sizing:border-box;"></div>
<div class="t " style="left:83.0px;top:1121.50px;font-size:22px;line-height:33.0px;color:#3b82e0;font-weight:normal;">收款过程</div>
<div style="position:absolute;left:204px;top:1112px;width:139px;height:54px;background:#f7f7fb;border:1px solid #ebebf0;border-radius:3px 3px 0 0;box-sizing:border-box;"></div>
<div class="t " style="left:229.5px;top:1121.50px;font-size:22px;line-height:33.0px;color:#333333;font-weight:normal;">相关员工</div>
<div style="position:absolute;left:350px;top:1112px;width:141px;height:54px;background:#f7f7fb;border:1px solid #ebebf0;border-radius:3px 3px 0 0;box-sizing:border-box;"></div>
<div class="t " style="left:376.5px;top:1121.50px;font-size:22px;line-height:33.0px;color:#333333;font-weight:normal;">执行计划</div>
<div style="position:absolute;left:497px;top:1112px;width:140px;height:54px;background:#f7f7fb;border:1px solid #ebebf0;border-radius:3px 3px 0 0;box-sizing:border-box;"></div>
<div class="t " style="left:523.0px;top:1121.50px;font-size:22px;line-height:33.0px;color:#333333;font-weight:normal;">状态预期</div>
<div style="position:absolute;left:644px;top:1112px;width:140px;height:54px;background:#f7f7fb;border:1px solid #ebebf0;border-radius:3px 3px 0 0;box-sizing:border-box;"></div>
<div class="t " style="left:670.0px;top:1121.50px;font-size:22px;line-height:33.0px;color:#333333;font-weight:normal;">相关发票</div>
<div style="position:absolute;left:791px;top:1112px;width:140px;height:54px;background:#f7f7fb;border:1px solid #ebebf0;border-radius:3px 3px 0 0;box-sizing:border-box;"></div>
<div class="t " style="left:817.0px;top:1121.50px;font-size:22px;line-height:33.0px;color:#333333;font-weight:normal;">状态变迁</div>
<div style="position:absolute;left:938px;top:1112px;width:95px;height:54px;background:#f7f7fb;border:1px solid #ebebf0;border-radius:3px 3px 0 0;box-sizing:border-box;"></div>
<div class="t " style="left:963.5px;top:1121.50px;font-size:22px;line-height:33.0px;color:#333333;font-weight:normal;">附件</div>
<div style="position:absolute;left:1041px;top:1112px;width:140px;height:54px;background:#f7f7fb;border:1px solid #ebebf0;border-radius:3px 3px 0 0;box-sizing:border-box;"></div>
<div class="t " style="left:1067.0px;top:1121.50px;font-size:22px;line-height:33.0px;color:#333333;font-weight:normal;">订单明细</div>
<div style="position:absolute;left:1188px;top:1112px;width:139px;height:54px;background:#f7f7fb;border:1px solid #ebebf0;border-radius:3px 3px 0 0;box-sizing:border-box;"></div>
<div class="t " style="left:1213.5px;top:1121.50px;font-size:22px;line-height:33.0px;color:#333333;font-weight:normal;">执行过程</div>
<div style="position:absolute;left:1334px;top:1112px;width:140px;height:54px;background:#f7f7fb;border:1px solid #ebebf0;border-radius:3px 3px 0 0;box-sizing:border-box;"></div>
<div class="t " style="left:1360.0px;top:1121.50px;font-size:22px;line-height:33.0px;color:#333333;font-weight:normal;">销售出库</div>
<div style="position:absolute;left:1481px;top:1112px;width:140px;height:54px;background:#f7f7fb;border:1px solid #ebebf0;border-radius:3px 3px 0 0;box-sizing:border-box;"></div>
<div class="t " style="left:1507.0px;top:1121.50px;font-size:22px;line-height:33.0px;color:#333333;font-weight:normal;">采购订单</div>
<div style="position:absolute;left:2019px;top:1117px;width:59px;height:44px;background:#dae8fb;border-radius:5px;"></div>
<svg style="position:absolute;left:2033px;top:1124px" width="30" height="30" viewBox="0 0 30 30"><polygon points="12.46,3.99 17.54,3.99 18.15,7.21 20.17,8.38 23.26,7.29 25.81,11.70 23.32,13.83 23.32,16.17 25.81,18.30 23.26,22.71 20.17,21.62 18.15,22.79 17.54,26.01 12.46,26.01 11.85,22.79 9.83,21.62 6.74,22.71 4.19,18.30 6.68,16.17 6.68,13.83 4.19,11.70 6.74,7.29 9.83,8.38 11.85,7.21" fill="none" stroke="#2f6fd6" stroke-width="1.7" stroke-linejoin="round"/><circle cx="15" cy="15" r="4.1" fill="none" stroke="#2f6fd6" stroke-width="1.7"/></svg>
<div class="t " style="left:57px;top:1185.50px;font-size:22px;line-height:33.0px;color:#333333;font-weight:normal;">销售收款列表</div>
<div style="position:absolute;left:2003px;top:1185px;width:75px;height:55px;background:#dbe8fb;border:1px solid #d3e2f8;box-sizing:border-box;border-radius:5px;"></div>
<div class="t " style="left:2019px;top:1190.50px;font-size:22px;line-height:33.0px;color:#2d7ae0;font-weight:normal;">新增</div>
<div style="position:absolute;left:2135px;top:127px;width:25px;height:1095px;background:#f1f1f1;"></div>
<div style="position:absolute;left:2137px;top:127px;width:21px;height:789px;background:#c1c1c1;"></div>
<svg style="position:absolute;left:2138px;top:1204px" width="18" height="12" viewBox="0 0 18 12"><polygon points="4,3 14,3 9,9" fill="#505050"/></svg>
<div style="position:absolute;left:869px;top:127px;width:180px;height:556px;background:#fff;border-radius:3px;box-shadow:0 2px 16px rgba(0,0,0,0.15);"></div>
<div style="position:absolute;left:869px;top:316px;width:180px;height:1px;background:#eeeeee;"></div>
<div style="position:absolute;left:869px;top:375px;width:180px;height:1px;background:#eeeeee;"></div>
<div style="position:absolute;left:869px;top:523px;width:180px;height:1px;background:#eeeeee;"></div>
<div style="position:absolute;left:869px;top:625px;width:180px;height:1px;background:#eeeeee;"></div>
<div class="t " style="left:892px;top:140.50px;font-size:22px;line-height:33.0px;color:#4a4a4a;font-weight:normal;">销售订单</div>
<div class="t " style="left:892px;top:184.50px;font-size:22px;line-height:33.0px;color:#4a4a4a;font-weight:normal;">销售退货</div>
<div class="t " style="left:892px;top:228.50px;font-size:22px;line-height:33.0px;color:#4a4a4a;font-weight:normal;">订单执行计划</div>
<div class="t " style="left:892px;top:272.50px;font-size:22px;line-height:33.0px;color:#4a4a4a;font-weight:normal;">订单执行过程</div>
<div class="t " style="left:892px;top:330.50px;font-size:22px;line-height:33.0px;color:#4a4a4a;font-weight:normal;">订单帐目</div>
<div class="t " style="left:892px;top:389.50px;font-size:22px;line-height:33.0px;color:#4a4a4a;font-weight:normal;">预收款项</div>
<div class="t " style="left:892px;top:433.50px;font-size:22px;line-height:33.0px;color:#4a4a4a;font-weight:normal;">销售收款</div>
<div class="t " style="left:892px;top:477.50px;font-size:22px;line-height:33.0px;color:#4a4a4a;font-weight:normal;">销售退款</div>
<div class="t " style="left:892px;top:535.50px;font-size:22px;line-height:33.0px;color:#4a4a4a;font-weight:normal;">销售毛利</div>
<div class="t " style="left:892px;top:579.50px;font-size:22px;line-height:33.0px;color:#4a4a4a;font-weight:normal;">欠款催收</div>
<div class="t " style="left:892px;top:637.50px;font-size:22px;line-height:33.0px;color:#4a4a4a;font-weight:normal;">发票管理</div>
</body></html>
